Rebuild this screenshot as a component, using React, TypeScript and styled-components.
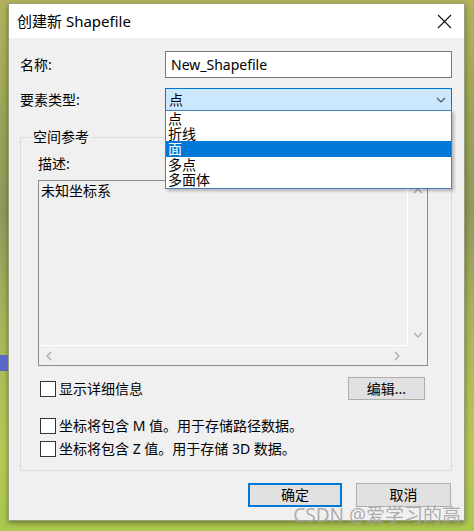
import React from "react";
import styled, { createGlobalStyle } from "styled-components";

const GlobalStyle = createGlobalStyle`
  html, body { margin: 0; padding: 0; }
  body {
    width: 474px;
    height: 531px;
    overflow: hidden;
    font-family: "Noto Sans", "Noto Sans CJK SC", sans-serif;
    background: linear-gradient(180deg, #b3b25b 0%, #9aa457 22%, #8e9a5c 40%, #a7b45a 60%, #b7c955 85%, #aac84e 100%);
  }
  * { box-sizing: border-box; }
`;

const Screen = styled.div`
  position: relative;
  width: 474px;
  height: 531px;
  padding: 3px 0 0 8px;
`;

const LeftPatch = styled.div`
  position: absolute;
  left: 0;
  top: 355px;
  width: 8px;
  height: 16px;
  background: #5b68c8;
`;

const Dialog = styled.div`
  width: 457px;
  height: 518px;
  display: flex;
  flex-direction: column;
  background: #f0f0f0;
  border: 1px solid #9aa07a;
  box-shadow: 0 2px 5px rgba(0, 0, 0, 0.4);
`;

const TitleBar = styled.div`
  height: 34px;
  flex: none;
  display: flex;
  align-items: center;
  justify-content: space-between;
  padding: 0 12px 0 8px;
  background: #ffffff;
`;

const Title = styled.span`
  font-size: 15px;
  line-height: 20px;
  color: #000;
`;

const Body = styled.div`
  flex: 1;
  display: flex;
  flex-direction: column;
  padding: 13px 12px 0 11px;
`;

const FormGrid = styled.div`
  display: grid;
  grid-template-columns: 145px 1fr;
  grid-template-rows: 27px 23px;
  row-gap: 10px;
  align-items: center;
`;

const Label = styled.span`
  font-size: 14px;
  line-height: 20px;
  color: #000;
`;

const TextInput = styled.div`
  height: 27px;
  border: 1px solid #7a7a7a;
  background: #fff;
  padding: 0 5px;
  display: flex;
  align-items: center;
  font-size: 14px;
  color: #000;
`;

const Select = styled.div`
  position: relative;
  height: 23px;
  border: 1px solid #0078d7;
  background: #cce8ff;
  display: flex;
  align-items: center;
  justify-content: space-between;
  padding: 0 5px 0 3px;
  font-size: 14px;
  line-height: 20px;
`;

const DropList = styled.div`
  position: absolute;
  top: 100%;
  left: -1px;
  right: -1px;
  background: #fff;
  border: 1px solid #4a7fb8;
  padding-bottom: 1px;
  box-shadow: 2px 2px 3px rgba(0, 0, 0, 0.25);
  z-index: 5;
`;

const DropItem = styled.div<{ $active?: boolean }>`
  height: 15.2px;
  line-height: 15.2px;
  font-size: 14px;
  padding-left: 2px;
  overflow: visible;
  color: ${(p) => (p.$active ? "#fff" : "#000")};
  background: ${(p) => (p.$active ? "#0078d7" : "transparent")};
`;

const Group = styled.fieldset`
  margin: 17px 0 0 0;
  padding: 0;
  border: 1px solid #dcdcdc;
  min-width: 0;
`;

const Legend = styled.legend`
  margin-left: 10px;
  padding: 0 2px;
  font-size: 14px;
  line-height: 18px;
`;

const GroupInner = styled.div`
  padding: 0 23px 10px 17px;
`;

const DescLabel = styled(Label)`
  display: block;
  margin-top: 8px;
`;

const ListBox = styled.div`
  margin-top: 6px;
  height: 186px;
  border: 1px solid #8c8c8c;
  display: grid;
  grid-template-columns: 1fr 20px;
  grid-template-rows: 1fr 20px;
  background: #f0f0f0;
`;

const ListContent = styled.div`
  padding: 1px 2px;
  font-size: 14px;
  line-height: 18px;
  color: #000;
`;

const VScroll = styled.div`
  border-left: 1px solid #ffffff;
  display: flex;
  flex-direction: column;
  justify-content: space-between;
  align-items: center;
  padding: 6px 0;
`;

const HScroll = styled.div`
  border-top: 1px solid #ffffff;
  display: flex;
  justify-content: space-between;
  align-items: center;
  padding: 0 6px;
`;

const Corner = styled.div`
  background: #f0f0f0;
`;

const DetailRow = styled.div`
  margin-top: 11px;
  height: 23px;
  display: flex;
  align-items: center;
  justify-content: space-between;
  padding: 0 3px 0 2px;
`;

const CheckRow = styled.label<{ $top?: number }>`
  display: flex;
  align-items: center;
  gap: 3px;
  height: 22px;
  margin-top: ${(p) => p.$top ?? 0}px;
  padding-left: 2px;
  font-size: 14px;
  line-height: 20px;
`;

const InlineCheck = styled.label`
  display: flex;
  align-items: center;
  gap: 3px;
  font-size: 14px;
  line-height: 20px;
`;

const Box = styled.span`
  width: 16px;
  height: 16px;
  border: 1px solid #333333;
  background: #ffffff;
  flex: none;
`;

const Button = styled.button<{ $primary?: boolean; $w: number; $h: number }>`
  width: ${(p) => p.$w}px;
  height: ${(p) => p.$h}px;
  background: #e1e1e1;
  border: 1px solid ${(p) => (p.$primary ? "#0078d7" : "#adadad")};
  box-shadow: ${(p) => (p.$primary ? "inset 0 0 0 1px #0078d7" : "none")};
  font-family: "Noto Sans", "Noto Sans CJK SC", sans-serif;
  font-size: 14px;
  line-height: 18px;
  color: #000;
  padding: 0;
  display: flex;
  align-items: center;
  justify-content: center;
`;

const ButtonRow = styled.div`
  margin-top: 12px;
  display: flex;
  justify-content: flex-end;
  gap: 14px;
  padding-right: 1px;
`;

const Watermark = styled.div`
  position: absolute;
  right: 13px;
  bottom: 5px;
  font-size: 19px;
  line-height: 22px;
  color: rgba(120, 120, 120, 0.6);
  text-shadow: 0 0 1px rgba(255, 255, 255, 0.6);
  white-space: nowrap;
  pointer-events: none;
`;

const Chevron = ({ dir, color = "#a6a6a6" }: { dir: "up" | "down" | "left" | "right"; color?: string }) => {
  const paths: Record<string, string> = {
    up: "M1 6 L5 2 L9 6",
    down: "M1 2 L5 6 L9 2",
    left: "M6 1 L2 5 L6 9",
    right: "M3 1 L7 5 L3 9",
  };
  const horiz = dir === "left" || dir === "right";
  return (
    <svg width={horiz ? 9 : 10} height={horiz ? 10 : 8} viewBox={horiz ? "0 0 9 10" : "0 0 10 8"}>
      <path d={paths[dir]} fill="none" stroke={color} strokeWidth="1.2" />
    </svg>
  );
};

export default function App() {
  return (
    <>
      <GlobalStyle />
      <Screen>
        <LeftPatch />
        <Dialog>
          <TitleBar>
            <Title>创建新 Shapefile</Title>
            <svg width="15" height="15" viewBox="0 0 15 15">
              <path d="M1 1 L14 14 M14 1 L1 14" stroke="#111" strokeWidth="1.1" />
            </svg>
          </TitleBar>
          <Body>
            <FormGrid>
              <Label>名称:</Label>
              <TextInput>New_Shapefile</TextInput>
              <Label>要素类型:</Label>
              <Select>
                <span>点</span>
                <Chevron dir="down" color="#555" />
                <DropList>
                  <DropItem>点</DropItem>
                  <DropItem>折线</DropItem>
                  <DropItem $active>面</DropItem>
                  <DropItem>多点</DropItem>
                  <DropItem>多面体</DropItem>
                </DropList>
              </Select>
            </FormGrid>
            <Group>
              <Legend>空间参考</Legend>
              <GroupInner>
                <DescLabel>描述:</DescLabel>
                <ListBox>
                  <ListContent>未知坐标系</ListContent>
                  <VScroll>
                    <Chevron dir="up" />
                    <Chevron dir="down" />
                  </VScroll>
                  <HScroll>
                    <Chevron dir="left" />
                    <Chevron dir="right" />
                  </HScroll>
                  <Corner />
                </ListBox>
                <DetailRow>
                  <InlineCheck>
                    <Box />
                    显示详细信息
                  </InlineCheck>
                  <Button $w={77} $h={23}>编辑...</Button>
                </DetailRow>
                <CheckRow $top={15}>
                  <Box />
                  坐标将包含 M 值。用于存储路径数据。
                </CheckRow>
                <CheckRow $top={1}>
                  <Box />
                  坐标将包含 Z 值。用于存储 3D 数据。
                </CheckRow>
              </GroupInner>
            </Group>
            <ButtonRow>
              <Button $primary $w={94} $h={24}>确定</Button>
              <Button $w={95} $h={24}>取消</Button>
            </ButtonRow>
          </Body>
        </Dialog>
        <Watermark>CSDN @爱学习的高</Watermark>
      </Screen>
    </>
  );
}
